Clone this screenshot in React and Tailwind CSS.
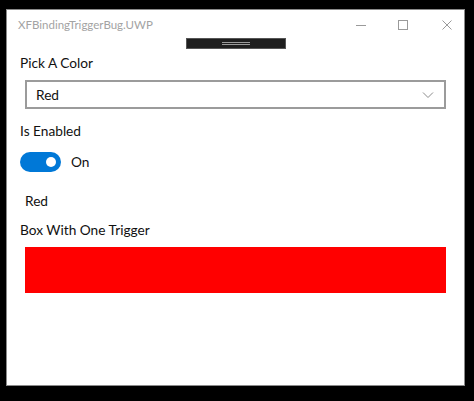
import React from "react";

export default function App() {
  const font = { fontFamily: 'Lato, "Noto Sans", sans-serif' };
  return (
    <div className="w-[474px] h-[401px] bg-black overflow-hidden pt-[9px] pl-[6px]" style={font}>
      <div className="relative w-[459px] h-[377px] bg-white border border-[#8a8a8a]">
        {/* title bar */}
        <div className="h-[29px] flex items-center pl-[11px] text-[11.5px] text-[#a3a3a3]">
          <span className="flex-1 leading-none">XFBindingTriggerBug.UWP</span>
          <div className="flex items-center">
            <svg width="46" height="28" viewBox="0 0 46 28">
              <line x1="8" y1="14.5" x2="18" y2="14.5" stroke="#9a9a9a" strokeWidth="1" />
            </svg>
            <svg width="44" height="28" viewBox="0 0 44 28">
              <rect x="4.5" y="9.5" width="9" height="9" fill="none" stroke="#9a9a9a" strokeWidth="1" />
            </svg>
            <svg width="26" height="28" viewBox="0 0 26 28">
              <path d="M4.5 9.5 L13.5 18.5 M13.5 9.5 L4.5 18.5" stroke="#9a9a9a" strokeWidth="1" />
            </svg>
          </div>
        </div>

        {/* debug toolbar overlay */}
        <div className="absolute left-[179px] top-[28px] w-[100px] h-[11px] bg-[#1e1e1e] border border-[#555] flex items-center justify-center">
          <div className="w-[28px] h-[3px] border-t border-b border-[#9a9a9a]" />
        </div>

        {/* content */}
        <div className="pl-[13px] text-[13.7px] text-[#111] leading-[20px]">
          <div className="mt-[14px] h-[20px]">Pick A Color</div>
          <div className="mt-[7px] ml-[5px] w-[421px] h-[29px] border-2 border-[#9b9b9b] flex items-center pl-[9px] pr-[10px]">
            <span className="flex-1">Red</span>
            <svg width="12" height="8" viewBox="0 0 12 8">
              <path d="M1 1.5 L6 6.5 L11 1.5" fill="none" stroke="#8c8c8c" strokeWidth="1" />
            </svg>
          </div>
          <div className="mt-[12px] h-[20px]">Is Enabled</div>
          <div className="mt-[11px] h-[20px] flex items-center">
            <div className="w-[41px] h-[20px] rounded-full bg-[#0078d7] flex items-center justify-end pr-[5px]">
              <div className="w-[10px] h-[10px] rounded-full bg-white" />
            </div>
            <span className="ml-[10px]">On</span>
          </div>
          <div className="mt-[19px] h-[20px] pl-[5px]">Red</div>
          <div className="mt-[9px] h-[20px]">Box With One Trigger</div>
          <div className="mt-[7px] ml-[5px] w-[421px] h-[46px] bg-[#ff0000]" />
        </div>
      </div>
    </div>
  );
}
